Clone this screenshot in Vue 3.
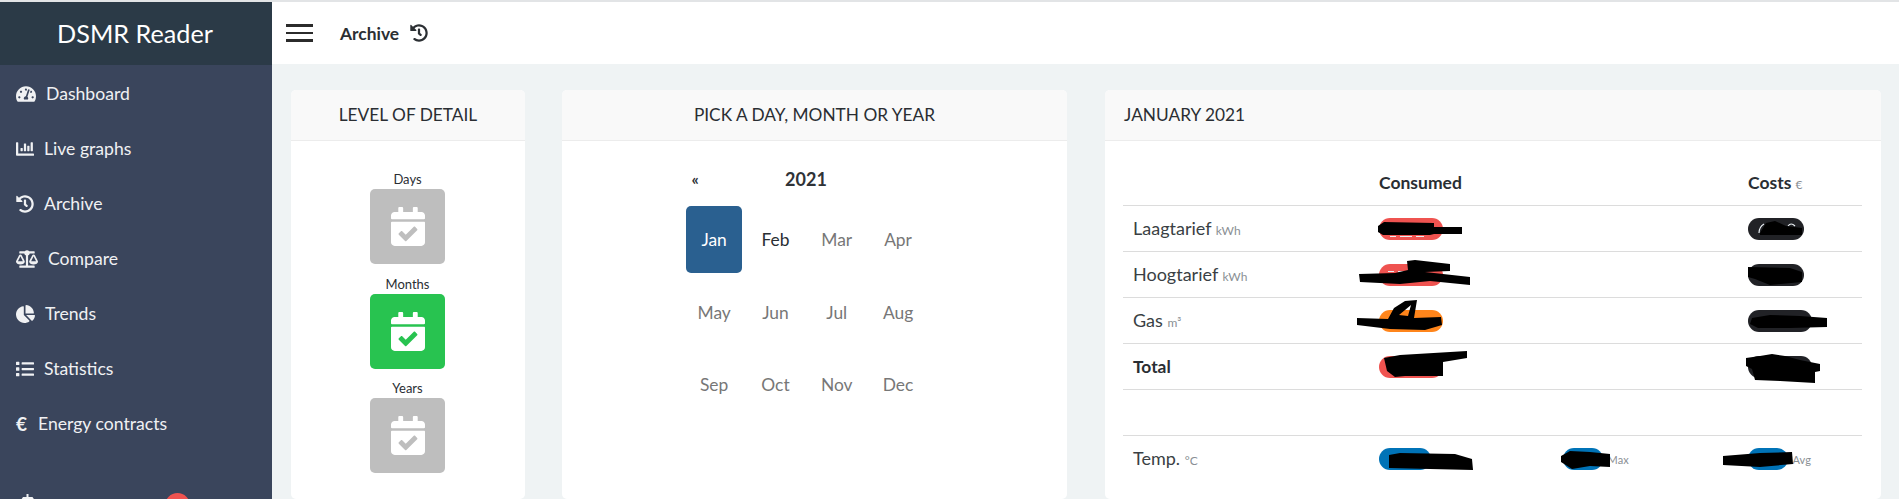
<script setup>
const menu = [
  { label: 'Dashboard', vb: '0 0 576 512', w: 20, d: 'M288 32C128.94 32 0 160.94 0 320c0 52.8 14.25 102.26 39.06 144.8 5.61 9.62 16.3 15.2 27.44 15.2h443c11.14 0 21.83-5.58 27.44-15.2C561.75 422.26 576 372.8 576 320c0-159.06-128.94-288-288-288zm0 64c14.71 0 26.58 10.13 30.32 23.65-1.11 2.26-2.64 4.23-3.45 6.67l-9.22 27.67c-5.13 3.49-10.97 6.01-17.64 6.01-17.67 0-32-14.33-32-32S270.33 96 288 96zM96 384c-17.67 0-32-14.33-32-32s14.33-32 32-32 32 14.33 32 32-14.33 32-32 32zm48-160c-17.67 0-32-14.33-32-32s14.33-32 32-32 32 14.33 32 32-14.33 32-32 32zm246.77-72.41l-61.33 184C343.13 347.33 352 364.54 352 384c0 11.72-3.38 22.55-8.88 32H232.88c-5.5-9.45-8.88-20.28-8.88-32 0-33.94 26.5-61.43 59.9-63.59l61.34-184.01c4.17-12.56 17.73-19.45 30.36-15.17 12.57 4.19 19.35 17.79 15.17 30.36zm14.66 57.2l15.52-46.55c3.47-1.29 7.13-2.23 11.05-2.23 17.67 0 32 14.33 32 32s-14.33 32-32 32c-11.38-.01-20.89-6.28-26.57-15.22zM480 384c-17.67 0-32-14.33-32-32s14.33-32 32-32 32 14.33 32 32-14.33 32-32 32z' },
  { label: 'Live graphs', vb: '0 0 512 512', w: 18, d: 'M332.8 320h38.4c6.4 0 12.8-6.4 12.8-12.8V172.8c0-6.4-6.4-12.8-12.8-12.8h-38.4c-6.4 0-12.8 6.4-12.8 12.8v134.4c0 6.4 6.4 12.8 12.8 12.8zm96 0h38.4c6.4 0 12.8-6.4 12.8-12.8V76.8c0-6.4-6.4-12.8-12.8-12.8h-38.4c-6.4 0-12.8 6.4-12.8 12.8v230.4c0 6.4 6.4 12.8 12.8 12.8zm-288 0h38.4c6.4 0 12.8-6.4 12.8-12.8v-70.4c0-6.4-6.4-12.8-12.8-12.8h-38.4c-6.4 0-12.8 6.4-12.8 12.8v70.4c0 6.4 6.4 12.8 12.8 12.8zm96 0h38.4c6.4 0 12.8-6.4 12.8-12.8V108.8c0-6.4-6.4-12.8-12.8-12.8h-38.4c-6.4 0-12.8 6.4-12.8 12.8v198.4c0 6.4 6.4 12.8 12.8 12.8zM496 384H64V80c0-8.84-7.16-16-16-16H16C7.16 64 0 71.16 0 80v336c0 17.67 14.33 32 32 32h464c8.84 0 16-7.16 16-16v-32c0-8.84-7.16-16-16-16z' },
  { label: 'Archive', vb: '0 0 512 512', w: 18, d: 'M504 255.531c.253 136.64-111.18 248.372-247.82 248.468-59.015.042-113.223-20.53-155.822-54.911-11.077-8.94-11.905-25.541-1.839-35.607l11.267-11.267c8.609-8.609 22.353-9.551 31.891-1.984C173.062 425.135 212.781 440 256 440c101.705 0 184-82.311 184-184 0-101.705-82.311-184-184-184-48.814 0-93.149 18.969-126.068 49.932l50.754 50.754c10.08 10.08 2.941 27.314-11.313 27.314H24c-8.837 0-16-7.163-16-16V38.627c0-14.254 17.234-21.393 27.314-11.314l49.372 49.372C129.209 34.136 189.552 8 256 8c136.81 0 247.747 110.78 248 247.531zm-180.912 78.784l9.823-12.63c8.138-10.463 6.253-25.542-4.21-33.679L288 256.349V152c0-13.255-10.745-24-24-24h-16c-13.255 0-24 10.745-24 24v135.651l65.409 50.874c10.463 8.137 25.541 6.253 33.679-4.21z' },
  { label: 'Compare', vb: '0 0 640 512', w: 22, d: 'M256 336h-.02c0-16.18 1.34-8.73-85.05-181.51-17.65-35.29-68.19-35.36-85.87 0C-2.06 328.75.02 320.33.02 336H0c0 44.18 57.31 80 128 80s128-35.82 128-80zM128 176l72 144H56l72-144zm511.98 160c0-16.18 1.34-8.73-85.05-181.51-17.65-35.29-68.19-35.36-85.87 0-87.12 174.26-85.04 165.84-85.04 181.51H384c0 44.18 57.31 80 128 80s128-35.82 128-80h-.02zM440 320l72-144 72 144H440zm88 128H352V153.25c23.51-10.29 41.16-31.48 46.39-57.25H528c8.84 0 16-7.16 16-16V48c0-8.84-7.16-16-16-16H383.64C369.04 12.68 346.09 0 320 0s-49.04 12.68-63.64 32H112c-8.84 0-16 7.16-16 16v32c0 8.84 7.16 16 16 16h129.61c5.23 25.76 22.87 46.96 46.39 57.25V448H112c-8.84 0-16 7.16-16 16v32c0 8.84 7.16 16 16 16h416c8.84 0 16-7.16 16-16v-32c0-8.84-7.16-16-16-16z' },
  { label: 'Trends', vb: '0 0 544 512', w: 19, d: 'M527.79 288H290.5l158.03 158.03c6.04 6.04 15.98 6.53 22.19.68 38.7-36.46 65.32-85.61 73.13-140.86 1.34-9.46-6.51-17.85-16.06-17.85zm-15.83-64.8C503.72 103.74 408.26 8.28 288.8.04 279.68-.59 272 7.1 272 16.24V240h223.77c9.14 0 16.82-7.68 16.19-16.8zM224 288V50.71c0-9.55-8.39-17.4-17.84-16.06C86.99 51.49-4.1 155.6.14 280.37 4.5 408.51 114.83 513.59 243.03 511.98c50.4-.63 96.97-16.87 135.26-44.03 7.9-5.6 8.42-17.23 1.57-24.08L224 288z' },
  { label: 'Statistics', vb: '0 0 512 512', w: 18, d: 'M80 368H16a16 16 0 0 0-16 16v64a16 16 0 0 0 16 16h64a16 16 0 0 0 16-16v-64a16 16 0 0 0-16-16zm0-320H16A16 16 0 0 0 0 64v64a16 16 0 0 0 16 16h64a16 16 0 0 0 16-16V64a16 16 0 0 0-16-16zm0 160H16a16 16 0 0 0-16 16v64a16 16 0 0 0 16 16h64a16 16 0 0 0 16-16v-64a16 16 0 0 0-16-16zm416 176H176a16 16 0 0 0-16 16v32a16 16 0 0 0 16 16h320a16 16 0 0 0 16-16v-32a16 16 0 0 0-16-16zm0-320H176a16 16 0 0 0-16 16v32a16 16 0 0 0 16 16h320a16 16 0 0 0 16-16V80a16 16 0 0 0-16-16zm0 160H176a16 16 0 0 0-16 16v32a16 16 0 0 0 16 16h320a16 16 0 0 0 16-16v-32a16 16 0 0 0-16-16z' },
]
const history = menu[2]
const calendarCheck = 'M436 160H12c-6.627 0-12-5.373-12-12v-36c0-26.51 21.49-48 48-48h48V12c0-6.627 5.373-12 12-12h40c6.627 0 12 5.373 12 12v52h128V12c0-6.627 5.373-12 12-12h40c6.627 0 12 5.373 12 12v52h48c26.51 0 48 21.49 48 48v36c0 6.627-5.373 12-12 12zM12 192h424c6.627 0 12 5.373 12 12v260c0 26.51-21.49 48-48 48H48c-26.51 0-48-21.49-48-48V204c0-6.627 5.373-12 12-12zm333.296 95.947l-28.169-28.398c-4.667-4.705-12.265-4.736-16.97-.068L194.12 364.665l-45.98-46.352c-4.667-4.705-12.266-4.736-16.971-.068l-28.397 28.17c-4.705 4.667-4.736 12.265-.068 16.97l82.601 83.269c4.667 4.705 12.265 4.736 16.97.068l142.953-141.805c4.705-4.667 4.736-12.265.068-16.97z'
const levels = [
  { label: 'Days', on: false },
  { label: 'Months', on: true },
  { label: 'Years', on: false },
]
const months = ['Jan','Feb','Mar','Apr','May','Jun','Jul','Aug','Sep','Oct','Nov','Dec']
const rows = [
  { label: 'Laagtarief', unit: 'kWh', tone: 'red', wide: false },
  { label: 'Hoogtarief', unit: 'kWh', tone: 'red', wide: false },
  { label: 'Gas', unit: 'm³', tone: 'orange', wide: true },
  { label: 'Total', unit: '', tone: 'red', wide: true, strong: true },
]
const blobs = [
  'M1378 226L1384 222L1434 223L1434 227L1462 227L1462 234L1434 234L1430 235L1383 235L1378 232Z',
  'M1359 274L1395 273L1408 270L1407 261L1415 260L1450 264L1450 271L1425 272L1470 277L1470 285L1430 281L1400 284L1360 282Z',
  'M1357 318L1388 319L1394 308L1405 301L1417 300L1414 318L1441 317L1442 325L1425 330L1390 329L1357 325ZM1399 315L1411 305L1408 316Z',
  'M1384 358L1400 355L1467 351L1467 358L1443 362L1443 376L1405 376L1395 377L1387 371Z',
  'M1389 455L1400 453L1455 454L1472 459L1473 470L1430 469L1389 468Z',
  'M1760 233L1766 223L1775 221L1786 226L1802 228L1802 235L1760 235Z',
  'M1748 267L1790 268L1802 272L1802 282L1770 285L1755 279L1748 277Z',
  'M1752 318L1770 315L1800 316L1827 318L1827 327L1790 328L1758 328L1750 324Z',
  'M1746 358L1760 356L1772 354L1785 356L1800 360L1820 364L1820 371L1815 372L1815 383L1780 381L1755 380L1752 369L1746 366Z',
  'M1561 456L1570 451L1590 452L1610 454L1610 467L1590 466L1572 469L1561 462Z',
  'M1723 456L1760 453L1792 452L1793 464L1760 467L1723 465Z',
]
const glints = [
  'M1759 233Q1759 227 1764 224',
  'M1788 226Q1791 222 1795 226',
  'M1788 272Q1791 268 1795 272',
  'M1390 236.500H1396M1400 236.500H1412M1416 236.500H1424',
  'M1388 271.500H1394M1398 271.500H1404',
]
</script>

<template>
  <div class="page">
    <aside class="sidebar">
      <div class="brand">DSMR Reader</div>
      <nav class="menu">
        <a v-for="m in menu" :key="m.label" class="item">
          <svg class="ico" :viewBox="m.vb" :style="{ width: m.w + 'px' }"><path :d="m.d" /></svg>
          <span>{{ m.label }}</span>
        </a>
        <a class="item">
          <span class="euro">€</span>
          <span>Energy contracts</span>
        </a>
        <a class="item last">
          <svg class="ico tip" viewBox="0 0 18 18"><path d="M10.500 0h2v3h4l2 3v12H5V6l2-3h3.500z" /></svg>
          <span class="badge"></span>
        </a>
      </nav>
    </aside>

    <main class="main">
      <header class="topbar">
        <button class="burger"><i></i><i></i><i></i></button>
        <span class="crumb">Archive</span>
        <svg class="crumb-ico" :viewBox="history.vb"><path :d="history.d" /></svg>
      </header>

      <section class="content">
        <article class="card level">
          <h3 class="card-head center">LEVEL OF DETAIL</h3>
          <div class="level-body">
            <div v-for="l in levels" :key="l.label" class="level-opt">
              <span class="level-label">{{ l.label }}</span>
              <div class="level-btn" :class="{ on: l.on }">
                <svg viewBox="0 0 448 512"><path :d="calendarCheck" /></svg>
              </div>
            </div>
          </div>
        </article>

        <article class="card pick">
          <h3 class="card-head center">PICK A DAY, MONTH OR YEAR</h3>
          <div class="pick-body">
            <div class="cal">
              <div class="cal-head">
                <span class="prev">«</span>
                <span class="year">2021</span>
              </div>
              <div class="cal-grid">
                <span v-for="(m, i) in months" :key="m" class="mon" :class="{ active: i === 0, dark: i === 1 }">
                  <b>{{ m }}</b>
                </span>
              </div>
            </div>
          </div>
        </article>

        <article class="card stats">
          <h3 class="card-head">JANUARY 2021</h3>
          <div class="stats-body">
            <table>
              <colgroup>
                <col class="c1" /><col class="c2" /><col class="c3" /><col class="c4" />
              </colgroup>
              <thead>
                <tr>
                  <th></th>
                  <th>Consumed</th>
                  <th></th>
                  <th>Costs <small>€</small></th>
                </tr>
              </thead>
              <tbody>
                <tr v-for="r in rows" :key="r.label">
                  <td class="name" :class="{ strong: r.strong }">{{ r.label }} <small v-if="r.unit">{{ r.unit }}</small></td>
                  <td><span class="pill" :class="r.tone"></span></td>
                  <td></td>
                  <td><span class="pill dark" :class="{ long: r.wide }"></span></td>
                </tr>
                <tr><td colspan="4" class="spacer"></td></tr>
                <tr class="temp">
                  <td class="name">Temp. <small>°C</small></td>
                  <td><span class="pill blue short"></span></td>
                  <td><span class="pill blue tiny"></span> <small>Max</small></td>
                  <td><span class="pill blue tiny"></span> <small>Avg</small></td>
                </tr>
              </tbody>
            </table>
          </div>
          <svg class="scribble" viewBox="1105 90 776 409" aria-hidden="true">
            <path v-for="(g, i) in glints" :key="'g' + i" class="glint" :d="g" />
            <path v-for="(b, i) in blobs" :key="i" :d="b" fill-rule="evenodd" />
          </svg>
        </article>
      </section>
    </main>
  </div>
</template>

<style>
html, body { margin: 0; padding: 0; height: 499px; overflow: hidden; background: #fff; }
</style>

<style scoped>
.page {
  width: 1899px;
  height: 499px;
  box-sizing: border-box;
  border-top: 2px solid #e2e4e6;
  display: flex;
  overflow: hidden;
  font-family: Lato, "Liberation Sans", sans-serif;
  color: #212529;
}
.sidebar { width: 272px; flex: none; background: #3a455c; display: flex; flex-direction: column; }
.brand {
  height: 63px;
  background: #2b3a47;
  color: #fff;
  font-size: 25.200px;
  line-height: 63px;
  text-align: center;
  padding-right: 2px;
}
.menu { padding-top: 1px; display: flex; flex-direction: column; }
.item {
  height: 55px;
  flex: none;
  padding-left: 16px;
  display: flex;
  align-items: center;
  gap: 10px;
  color: #f0f1f3;
  font-size: 17.600px;
  position: relative;
}
.ico { height: 18px; fill: #f0f1f3; flex: none; }
.euro { font-weight: 700; font-size: 19px; width: 12px; }
.item.last { margin-top: 28px; align-items: flex-start; padding-top: 15px; box-sizing: border-box; }
.tip { width: 18px; }
.badge {
  position: absolute;
  left: 165px;
  top: 14px;
  width: 25px;
  height: 25px;
  border-radius: 50%;
  background: #ef5350;
}
.main { flex: 1; display: flex; flex-direction: column; min-width: 0; background: #eff3f4; }
.topbar {
  height: 62px;
  flex: none;
  background: #fff;
  display: flex;
  align-items: center;
  padding-left: 14px;
}
.burger {
  width: 27px;
  padding: 0;
  border: 0;
  background: none;
  display: flex;
  flex-direction: column;
  gap: 5px;
}
.burger i { display: block; height: 2.500px; background: #2b2b2b; }
.crumb { margin-left: 27px; font-size: 17.400px; font-weight: 700; color: #2b2f33; }
.crumb-ico { width: 18px; height: 18px; margin-left: 11px; fill: #2b2f33; }
.content {
  flex: 1;
  display: flex;
  align-items: flex-start;
  padding: 26px 0 0 19px;
}
.card {
  height: 409px;
  background: #fff;
  border-radius: 5px;
  overflow: hidden;
  position: relative;
  flex: none;
}
.level { width: 234px; margin-right: 37px; }
.pick { width: 505px; margin-right: 38px; }
.stats { width: 776px; }
.card-head {
  margin: 0;
  height: 50px;
  line-height: 50px;
  background: #f9f9f9;
  border-bottom: 1px solid #ececec;
  font-size: 17.300px;
  font-weight: 400;
  color: #2a2e33;
  padding-left: 19px;
}
.card-head.center { text-align: center; padding-left: 0; }
.level-body { padding: 28px 1px 0 0; display: flex; flex-direction: column; align-items: center; gap: 9.500px; }
.level-opt { display: flex; flex-direction: column; align-items: center; }
.level-label { font-size: 13px; line-height: 20px; height: 20px; color: #2a2e33; }
.level-btn {
  width: 75px;
  height: 75px;
  border-radius: 5px;
  background: #bebebe;
  display: flex;
  align-items: center;
  justify-content: center;
}
.level-btn svg { width: 34px; height: 39px; fill: #fff; }
.level-btn.on { background: #28c350; }
.pick-body { padding: 20px 17px 0 0; display: flex; justify-content: center; }
.cal { width: 245px; }
.cal-head { position: relative; height: 42.500px; line-height: 36px; text-align: center; }
.prev { position: absolute; left: 8px; top: 0; font-weight: 700; font-size: 16px; color: #2a2e33; }
.year { font-size: 18px; font-weight: 700; color: #2f3337; }
.cal-grid { display: grid; grid-template-columns: repeat(4, 61.300px); grid-auto-rows: 72.400px; }
.mon { display: flex; align-items: center; justify-content: center; color: #777; font-size: 17.400px; }
.mon b { font-weight: 400; }
.mon.dark { color: #2a2e33; }
.mon.active {
  background: #2a6090;
  color: #fff;
  border-radius: 5px;
  margin: 2.500px;
  height: 67px;
}
.stats-body { padding: 23px 19px 0 18px; }
table { width: 739px; table-layout: fixed; border-collapse: collapse; font-size: 18px; color: #3a3f44; }
.c1 { width: 245px; } .c2 { width: 184px; } .c3 { width: 185px; } .c4 { width: 125px; }
th, td { padding: 0 0 0 11px; height: 46px; box-sizing: border-box; text-align: left; border-bottom: 1px solid #dcdcdc; font-weight: 400; }
td.name { padding-left: 10px; }
thead th { height: 41px; padding-bottom: 3px; font-weight: 700; color: #2a2e33; font-size: 17.500px; vertical-align: middle; }
tbody tr:last-child td { border-bottom: 0; }
small { font-size: 12px; color: #8a8f94; font-weight: 400; }
.temp td + td small { font-size: 11px; }
td.strong { font-weight: 700; color: #2a2e33; font-size: 17.400px; }
td.spacer { padding: 0; }
.pill { display: inline-block; vertical-align: middle; height: 22px; width: 64px; border-radius: 11px; }
.pill.red { background: #ef5350; }
.pill.orange { background: #ff851b; }
.pill.dark { background: #212226; width: 56px; }
.pill.dark.long { width: 64px; }
.pill.blue { background: #0073b7; }
.pill.short { width: 52px; }
.pill.tiny { width: 40px; }
.scribble { position: absolute; left: 0; top: 0; width: 776px; height: 409px; fill: #000; pointer-events: none; }
.glint { fill: none; stroke: #e8eef2; stroke-width: 1.200px; }
</style>
